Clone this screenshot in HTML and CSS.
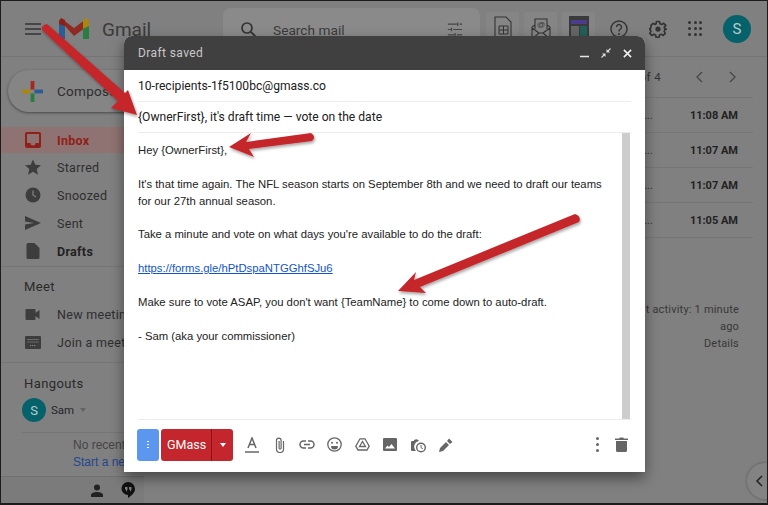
FILE: index.html
```html
<!DOCTYPE html>
<html lang="en">
<head>
<meta charset="utf-8">
<title>Gmail draft</title>
<link rel="stylesheet" href="styles.css">
</head>
<body>
<div class="frame">
  <header class="topbar">
    <svg class="menu" width="18" height="14" viewBox="0 0 18 14"><path d="M1 2h16M1 7h16M1 12h16" stroke="#333" stroke-width="1.7"/></svg>
    <svg class="logo" width="32" height="24" viewBox="0 0 32 24"><path d="M1 4v18h6V9z" fill="#2a5d96"/><path d="M25 9v13h6V4z" fill="#2a7d42"/><path d="M1 4l3-2 12 9 12-9 3 2v4l-15 11L7 9 1 6z" fill="#8e2a22"/><path d="M25 3l4-2 2 3v5l-6 3z" fill="#a98610"/><path d="M1 4l2-3 4 2v6L1 7z" fill="#8a2018"/></svg>
    <span class="brand">Gmail</span>
    <div class="search">
      <svg width="18" height="18" viewBox="0 0 18 18"><circle cx="7" cy="7" r="5" fill="none" stroke="#333" stroke-width="1.7"/><path d="M11 11l6 6" stroke="#333" stroke-width="1.8"/></svg>
      <span class="search-text">Search mail</span>
      <svg class="tune" width="16" height="15" viewBox="0 0 18 16"><path d="M1 2h10M14 2h3M1 8h3M7 8h10M1 14h7M11 14h6M12 0v4M5 6v4M9 12v4" stroke="#444" stroke-width="1.4" fill="none"/></svg>
    </div>
    <div class="addons">
      <div class="addon"><svg width="18" height="26" viewBox="0 0 18 26"><path d="M1 1h11l5 5v19H1z" fill="none" stroke="#333" stroke-width="1.1"/><path d="M5 10h9v8H5zM5 14h9M9.500 10v8" fill="none" stroke="#333"/></svg></div>
      <div class="addon"><svg width="20" height="22" viewBox="0 0 20 22"><path d="M1 9v12h18V9M1 9l3-2M19 9l-3-2M1 21l7-6h4l7 6M1 10l7 5M19 10l-7 5M4 11V1h12v10" fill="none" stroke="#333" stroke-width="1.1"/><text x="10" y="9" class="at">@</text></svg></div>
      <div class="addon"><svg width="20" height="26" viewBox="0 0 20 26"><path d="M0 0h20v26H0z" fill="#3a3a3a"/><path d="M2 4h16v4H2z" fill="#4b3d8c"/><path d="M11 10h7v14h-7z" fill="#245f5a"/><path d="M2 10h8v14H2z" fill="#666"/></svg></div>
    </div>
    <svg class="top-icon help" width="18" height="18" viewBox="0 0 18 18"><circle cx="9" cy="9" r="8" fill="none" stroke="#333" stroke-width="1.4"/><path d="M6.500 7a2.500 2.500 0 1 1 4 2c-1 .8-1.500 1-1.500 2.500" fill="none" stroke="#333" stroke-width="1.4"/><circle cx="9" cy="14" r="1" fill="#333"/></svg>
    <svg class="top-icon" width="18" height="18" viewBox="0 0 24 24"><path fill="none" stroke="#333" stroke-width="2.200" stroke-linejoin="round" d="M10 2h4l.6 3 2.400 1 2.600-1.600 2.800 2.800L20.200 9.800l.8 1.700 2 .5v0 0l0 .5v0l-2 .5-.8 2.200 1.600 2.600-2.800 2.800-2.600-1.600-2.400 1-.6 3h-4l-.6-3-2.400-1-2.600 1.600-2.800-2.800 1.600-2.600-.8-2.200-2-.5V12l2-.5.8-1.700L2.600 7.200l2.800-2.800L8 6l1.400-1z"/><circle cx="12" cy="12" r="3.500" fill="#333"/></svg>
    <div class="apps"><i></i><i></i><i></i><i></i><i></i><i></i><i></i><i></i><i></i></div>
    <div class="avatar">S</div>
  </header>

  <div class="main">
    <aside class="sidebar">
      <div class="compose">
        <svg width="21" height="21" viewBox="0 0 22 22"><path d="M9 0h4v9H9z" fill="#a52a22"/><path d="M13 9h9v4h-9z" fill="#2a5d96"/><path d="M9 13h4v9H9z" fill="#2a7d42"/><path d="M0 9h9v4H0z" fill="#a98610"/></svg>
        <span>Compose</span>
      </div>
      <nav class="nav">
        <div class="nav-item active">
          <svg width="16" height="16" viewBox="0 0 16 16"><path d="M0 2a2 2 0 0 1 2-2h12a2 2 0 0 1 2 2v12a2 2 0 0 1-2 2H2a2 2 0 0 1-2-2zM2 2v9h3.500a2.500 2.500 0 0 0 5 0H14V2z" fill="#8f2019" fill-rule="evenodd"/></svg>
          <span>Inbox</span>
        </div>
        <div class="nav-item">
          <svg width="16" height="16" viewBox="0 0 16 16"><path d="M8 .5l2.300 5.300 5.700.5-4.300 3.800 1.300 5.600L8 12.700l-5 3 1.300-5.600L0 6.300l5.700-.5z" fill="#3d3d3d"/></svg>
          <span>Starred</span>
        </div>
        <div class="nav-item">
          <svg width="16" height="16" viewBox="0 0 16 16"><circle cx="8" cy="8" r="7.500" fill="#3d3d3d"/><path d="M8 3.500V8l3 2" stroke="#808080" stroke-width="1.300" fill="none"/></svg>
          <span>Snoozed</span>
        </div>
        <div class="nav-item">
          <svg width="16" height="14" viewBox="0 0 16 14"><path d="M0 0l16 7-16 7V8.500L9 7 0 5.500z" fill="#3d3d3d"/></svg>
          <span>Sent</span>
        </div>
        <div class="nav-item strong">
          <svg width="13" height="16" viewBox="0 0 13 16"><path d="M1.500 0H8l5 5v9.500a1.500 1.500 0 0 1-1.500 1.500h-10A1.500 1.500 0 0 1 0 14.500v-13A1.500 1.500 0 0 1 1.500 0z" fill="#3d3d3d"/></svg>
          <span>Drafts</span>
        </div>
      </nav>
      <section class="side-section meet">
        <h2>Meet</h2>
        <div class="nav-item">
          <svg width="15" height="11" viewBox="0 0 15 11"><path d="M0 1a1 1 0 0 1 1-1h8a1 1 0 0 1 1 1v3l4-3v9l-4-3v3a1 1 0 0 1-1 1H1a1 1 0 0 1-1-1z" fill="#3d3d3d"/></svg>
          <span>New meeting</span>
        </div>
        <div class="nav-item">
          <svg width="16" height="13" viewBox="0 0 16 13"><path d="M1 0h14a1 1 0 0 1 1 1v11a1 1 0 0 1-1 1H1a1 1 0 0 1-1-1V1a1 1 0 0 1 1-1z" fill="#3d3d3d"/><path d="M2.500 3.500h11M2.500 6h11M5 9.500h6" stroke="#888" stroke-width="1.200" stroke-dasharray="1.200 .8"/></svg>
          <span>Join a meeting</span>
        </div>
      </section>
      <section class="side-section hangouts">
        <h2>Hangouts</h2>
        <div class="hangout-user">
          <div class="avatar small">S</div>
          <span>Sam</span>
          <i class="caret"></i>
        </div>
        <div class="no-recent">
          <p>No recent chats</p>
          <a href="#">Start a new one</a>
        </div>
      </section>
      <div class="side-foot">
        <svg width="12" height="13" viewBox="0 0 12 13"><circle cx="6" cy="3.500" r="3" fill="#222"/><path d="M0 13v-2c0-2 3-3 6-3s6 1 6 3v2z" fill="#222"/></svg>
        <svg class="bubble" width="14" height="16" viewBox="0 0 14 16"><path d="M7 0a7 7 0 0 1 7 7c0 4-4 7-7 9v-3a6.500 6.500 0 0 1 0-13z" fill="#111"/><path d="M4 5h2.500v2.500L5 10V7.500H4zM8 5h2.500v2.500L9 10V7.500H8z" fill="#808080"/></svg>
      </div>
    </aside>

    <section class="list">
      <div class="list-head">
        <span class="count">1–4 of 4</span>
        <svg width="8" height="12" viewBox="0 0 8 12"><path d="M7 1L2 6l5 5" fill="none" stroke="#444" stroke-width="1.200"/></svg>
        <svg width="8" height="12" viewBox="0 0 8 12"><path d="M1 1l5 5-5 5" fill="none" stroke="#444" stroke-width="1.200"/></svg>
      </div>
      <div class="row"><span class="snippet">Draft...</span><b>11:08 AM</b></div>
      <div class="row"><span class="snippet">Draft...</span><b>11:07 AM</b></div>
      <div class="row"><span class="snippet">Draft...</span><b>11:07 AM</b></div>
      <div class="row"><span class="snippet">Draft...</span><b>11:05 AM</b></div>
      <div class="activity">
        <p>Last account activity: 1 minute</p>
        <p>ago</p>
        <p>Details</p>
      </div>
    </section>
  </div>

  <div class="side-toggle">
    <svg width="8" height="12" viewBox="0 0 8 12"><path d="M7 1L2 6l5 5" fill="none" stroke="#222" stroke-width="1.500"/></svg>
  </div>

  <article class="dialog">
    <header class="dialog-head">
      <span>Draft saved</span>
      <div class="dialog-controls">
        <svg width="9" height="9" viewBox="0 0 9 9"><path d="M0 7.500h9" stroke="#e6e6e6" stroke-width="1.600"/></svg>
        <svg width="10" height="10" viewBox="0 0 10 10"><path d="M9.500.5L6.500 3.500M.5 9.500l3-3" stroke="#ddd" stroke-width="1.100"/><path d="M5.500 1v3.500H9M1 5.500h3.500V9z" fill="#ddd"/></svg>
        <svg width="9" height="9" viewBox="0 0 10 10"><path d="M1 1l8 8M9 1L1 9" stroke="#eee" stroke-width="1.800"/></svg>
      </div>
    </header>
    <div class="field field-to">10-recipients-1f5100bc@gmass.co</div>
    <div class="field field-subject">{OwnerFirst}, it's draft time — vote on the date</div>
    <div class="body-wrap">
      <div class="body">
        <p>Hey {OwnerFirst},</p>
        <p>It's that time again. The NFL season starts on September 8th and we need to draft our teams<br>for our 27th annual season.</p>
        <p>Take a minute and vote on what days you're available to do the draft:</p>
        <p><a href="#">https://forms.gle/hPtDspaNTGGhfSJu6</a></p>
        <p>Make sure to vote ASAP, you don't want {TeamName} to come down to auto-draft.</p>
        <p>- Sam (aka your commissioner)</p>
      </div>
      <div class="scrollbar"></div>
    </div>
    <footer class="toolbar">
      <div class="dots-btn"><i></i><i></i><i></i></div>
      <div class="gmass"><span class="gmass-label">GMass</span><span class="gmass-menu"><i class="caret white"></i></span></div>
      <div class="tools">
        <svg width="14" height="16" viewBox="0 0 14 16"><path d="M3 11L7 1l4 10M4.500 7.500h5" fill="none" stroke="#666" stroke-width="1.500"/><path d="M0 15h14" stroke="#666" stroke-width="1.500"/></svg>
        <svg width="10" height="16" viewBox="0 0 10 16"><path d="M8.500 4v8a3.500 3.500 0 0 1-7 0V3.500a2.300 2.300 0 0 1 4.600 0V11a1 1 0 0 1-2 0V4" fill="none" stroke="#666" stroke-width="1.200"/></svg>
        <svg width="16" height="9" viewBox="0 0 16 9"><path d="M7 1H4.500a3.500 3.500 0 0 0 0 7H7M9 1h2.500a3.500 3.500 0 0 1 0 7H9M5 4.500h6" fill="none" stroke="#666" stroke-width="1.500"/></svg>
        <svg width="15" height="15" viewBox="0 0 15 15"><circle cx="7.500" cy="7.500" r="6.700" fill="none" stroke="#666" stroke-width="1.300"/><circle cx="5" cy="5.800" r="1" fill="#666"/><circle cx="10" cy="5.800" r="1" fill="#666"/><path d="M4 9h7a3.500 3.500 0 0 1-7 0z" fill="#666"/></svg>
        <svg width="15" height="13" viewBox="0 0 15 13"><path d="M5 .8h5l4.200 7.400L12 12H3L.8 8.200zM7.500 3.500l-3 5h6z" fill="none" stroke="#666" stroke-width="1.300"/></svg>
        <svg width="14" height="13" viewBox="0 0 14 13"><path d="M1 0h12a1 1 0 0 1 1 1v11a1 1 0 0 1-1 1H1a1 1 0 0 1-1-1V1a1 1 0 0 1 1-1zM2 10.500h10L8.500 6l-2.500 3-1.500-1.500z" fill="#666" fill-rule="evenodd"/></svg>
        <svg width="16" height="16" viewBox="0 0 16 16"><path d="M1 5a1 1 0 0 1 1-1h1.500a3 3 0 0 1 5.500 0H8.500A6 6 0 0 0 6 14H2a1 1 0 0 1-1-1z" fill="#666"/><circle cx="11" cy="10.500" r="4.300" fill="none" stroke="#666" stroke-width="1.400"/><path d="M11 8v2.700l1.800 1" fill="none" stroke="#666"/></svg>
        <svg width="14" height="14" viewBox="0 0 14 14"><path d="M0 14l1-4 6-6 3 3-6 6zM8 3l2-2.500 3.500 3.500L11 6z" fill="#666"/></svg>
      </div>
      <div class="tools-end">
        <div class="vdots"><i></i><i></i><i></i></div>
        <svg width="13" height="15" viewBox="0 0 13 15"><path d="M0 1.500h4L5 .5h3l1 1h4V3H0zM1 4h11v9.500a1.500 1.500 0 0 1-1.500 1.500h-8A1.500 1.500 0 0 1 1 13.500z" fill="#666"/></svg>
      </div>
    </footer>
  </article>

  <svg class="arrows" width="768" height="505" viewBox="0 0 768 505">
    <defs><filter id="sh" x="-10%" y="-10%" width="120%" height="120%"><feDropShadow dx="1" dy="2" stdDeviation="1.500" flood-color="#000" flood-opacity=".35"/></filter></defs>
    <g fill="#c5262c" filter="url(#sh)">
      <path d="M137 115L111 108l7-7L42 30Q41 25 47 24L125 93l3-3z"/>
      <path d="M229 147L251 133l-5 9 65-9Q317 137 312 141l-63 8 5 8z"/>
      <path d="M398 291L416 272l-2 8L575 214Q582 217 579 222L420 287l6 6z"/>
    </g>
  </svg>
</div>
</body>
</html>
```

FILE: styles.css
```css
* { box-sizing: border-box; }
html, body { margin: 0; padding: 0; }
body { width: 768px; height: 505px; overflow: hidden; font-family: Roboto, "Liberation Sans", sans-serif; color: #262626; }
p, h2 { margin: 0; font-weight: 400; }
a { text-decoration: none; }

.frame { position: relative; width: 768px; height: 505px; overflow: hidden; background: #808080; border: 1px solid #1c1c1c; border-width: 1px 1px 2px 1px; display: flex; flex-direction: column; }

.topbar { height: 56px; flex: none; display: flex; align-items: center; padding-left: 23px; border-bottom: 1px solid #757575; }
.menu { flex: none; }
.logo { margin-left: 16px; flex: none; }
.brand { margin-left: 12px; margin-top: 1px; font-size: 19px; color: #3a3a3a; width: 56px; flex: none; }
.search { margin-left: 65px; width: 257px; height: 44px; margin-top: 2px; flex: none; background: #8a8a8a; border-radius: 8px 8px 0 0; display: flex; align-items: center; padding-left: 17px; }
.search-text { margin-left: 15px; font-size: 13.700px; color: #3a3a3a; flex: 1; }
.tune { margin-right: 17px; }
.addons { display: flex; gap: 5px; margin-left: 6px; flex: none; }
.addon { width: 33px; height: 34px; background: #858585; display: flex; align-items: center; justify-content: center; }
.at { font: 8px "Liberation Sans", sans-serif; text-anchor: middle; fill: #333; }
.top-icon { margin-left: 21px; flex: none; }
.top-icon.help { margin-left: 15px; }
.apps { margin-left: 21px; width: 14px; flex: none; display: grid; grid-template-columns: repeat(3, 3px); gap: 3px 2.500px; }
.apps i { width: 3px; height: 3px; background: #333; border-radius: 50%; }
.avatar { margin-left: 21px; width: 28px; height: 28px; border-radius: 50%; background: #05616a; color: #b8cdd0; font-size: 15px; display: flex; align-items: center; justify-content: center; flex: none; }
.avatar.small { width: 24px; height: 24px; margin-left: 0; font-size: 13px; }

.main { flex: 1; display: flex; min-height: 0; }
.sidebar { width: 143px; flex: none; display: flex; flex-direction: column; position: relative; }
.compose { margin: 13px 0 0 7px; width: 136px; height: 42px; border-radius: 24px 0 0 24px; background: #858585; box-shadow: 0 1px 3px rgba(0,0,0,.45); display: flex; align-items: center; padding-left: 14px; gap: 14px; font-size: 13.500px; color: #2e2e2e; flex: none; white-space: nowrap; letter-spacing: .3px; }
.nav { margin-top: 15px; flex: none; }
.nav-item { height: 28px; display: flex; align-items: center; padding-left: 24px; font-size: 12.500px; letter-spacing: .3px; color: #2e2e2e; white-space: nowrap; }
.nav-item svg { width: 16px; flex: none; margin-right: 16px; }
.nav-item.active { background: #8f7372; color: #8f2019; font-weight: 700; height: 26px; }
.nav-item.strong { font-weight: 700; color: #222; }
.side-section { border-top: 1px solid #757575; flex: none; }
.side-section h2 { font-size: 13px; padding-left: 23px; letter-spacing: .4px; color: #2a2a2a; height: 15px; line-height: 15px; }
.meet { margin-top: 1px; height: 96px; padding-top: 12px; }
.meet h2 { margin-bottom: 6px; }
.hangouts { height: 114px; padding-top: 13px; }
.hangout-user { display: flex; align-items: center; margin: 8px 0 0 21px; font-size: 11.500px; color: #262626; border-bottom: 1px solid #757575; height: 34px; padding-bottom: 11px; }
.hangout-user span { margin-left: 5px; }
.caret { display: inline-block; width: 0; height: 0; border: 3.500px solid transparent; border-top: 4px solid #626262; border-bottom: 0; margin-left: 6px; }
.caret.white { border-top-color: #fff; margin: 0; }
.no-recent { margin-top: 4px; padding-left: 72px; font-family: "Liberation Sans", sans-serif; font-size: 12px; line-height: 17px; white-space: nowrap; }
.no-recent p { color: #444; }
.no-recent a { color: #1f4690; }
.side-foot { flex: 1; background: #7b7b7b; border-top: 1px solid #707070; display: flex; align-items: center; justify-content: flex-end; gap: 18px; padding-right: 9px; }

.list { flex: 1; padding: 0 14px 0 0; position: relative; min-width: 0; }
.list-head { height: 41px; display: flex; align-items: center; justify-content: flex-end; gap: 26px; font-size: 11.500px; color: #333; padding-right: 16px; border-bottom: 1px solid #757575; }
.row { height: 35px; display: flex; align-items: center; justify-content: flex-end; border-bottom: 1px solid #757575; font-size: 11px; color: #222; padding-right: 15px; gap: 37px; }
.snippet { color: #333; font-size: 11px; }
.row b { font-weight: 700; }
.activity { margin-top: 63px; text-align: right; font-size: 11px; line-height: 17px; color: #383838; padding-right: 14px; letter-spacing: .2px; }
.count { margin-right: 8px; white-space: nowrap; letter-spacing: .4px; }
.side-toggle { position: absolute; right: -16px; bottom: 4px; width: 36px; height: 36px; border-radius: 50%; background: #838383; box-shadow: 0 0 3px rgba(0,0,0,.35); display: flex; align-items: center; padding-left: 8px; }

.dialog { position: absolute; left: 123px; top: 35px; width: 521px; height: 436px; background: #fff; border-radius: 8px 8px 0 0; box-shadow: 0 6px 14px rgba(0,0,0,.45); display: flex; flex-direction: column; overflow: hidden; }
.dialog-head { height: 34px; flex: none; background: #404040; color: #c9c9c9; font-size: 12px; letter-spacing: .4px; display: flex; align-items: center; justify-content: space-between; padding: 0 13px 0 14px; }
.dialog-controls { display: flex; gap: 12px; align-items: center; }
.field { margin: 0 14px; flex: none; border-bottom: 1px solid #ececec; display: flex; align-items: center; font-size: 12.100px; color: #202020; }
.field-to { height: 32px; padding-top: 1px; }
.field-subject { height: 31px; }
.body-wrap { flex: none; height: 287px; margin: 0 14px; display: flex; border-bottom: 1px solid #ececec; }
.body { flex: 1; font-family: "Liberation Sans", sans-serif; font-size: 11.300px; line-height: 16.800px; color: #222; padding-top: 9px; }
.body p { margin-bottom: 17px; }
.body a { color: #1155cc; text-decoration: underline; }
.scrollbar { width: 8px; background: #cdcdcd; margin-right: 1px; }
.toolbar { flex: 1; display: flex; align-items: center; padding: 0 17px 3px 13px; }
.dots-btn { width: 22px; height: 32px; background: #5b97ef; border-radius: 3px; display: flex; flex-direction: column; align-items: center; justify-content: center; gap: 1.500px; flex: none; }
.dots-btn i { width: 1.500px; height: 1.500px; background: #fff; display: block; }
.gmass { margin-left: 2px; height: 32px; background: #c3262c; border-radius: 3px; display: flex; color: #fff; font-size: 12.500px; font-weight: 400; align-items: stretch; flex: none; }
.gmass-label { width: 51px; padding-left: 6px; display: flex; align-items: center; border-right: 1px solid #8c1016; }
.gmass-menu { width: 21px; display: flex; align-items: center; justify-content: center; }
.tools { margin-left: 5px; display: grid; grid-auto-flow: column; grid-auto-columns: 27.700px; justify-items: center; align-items: center; flex: 1; justify-content: start; }
.tools-end { display: flex; align-items: center; gap: 16px; }
.vdots { display: flex; flex-direction: column; gap: 3px; }
.vdots i { width: 3px; height: 3px; background: #666; border-radius: 50%; display: block; }

.arrows { position: absolute; left: -1px; top: -1px; pointer-events: none; }
```
